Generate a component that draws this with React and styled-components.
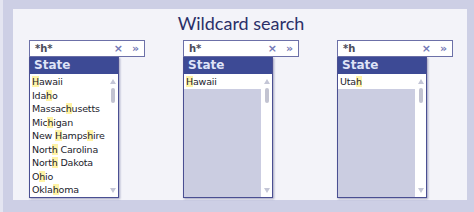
import React from 'react';
import styled, { createGlobalStyle } from 'styled-components';

const GlobalStyle = createGlobalStyle`
  html, body {
    margin: 0;
    padding: 0;
    background: #cdcfe5;
  }
  body {
    font-family: "DejaVu Sans", Verdana, sans-serif;
  }
`;

const Page = styled.div`
  width: 474px;
  height: 212px;
  box-sizing: border-box;
  padding: 9px 7px 12px 13px;
  background: linear-gradient(90deg, #e4e5f1 0, #e4e5f1 3px, #cdcfe5 3px);
`;

const Panel = styled.div`
  height: 100%;
  box-sizing: border-box;
  background: #f3f3f9;
  padding: 2px 14px 0 16px;
  display: flex;
  flex-direction: column;
`;

const Title = styled.h1`
  margin: 0;
  font-family: Lato, "Open Sans", sans-serif;
  font-weight: 400;
  font-size: 18px;
  line-height: 24px;
  color: #2b2f68;
  text-align: center;
  height: 29px;
`;

const Row = styled.div`
  display: flex;
  gap: 38px;
`;

const Column = styled.div`
  width: 116px;
  display: flex;
  flex-direction: column;
`;

const SearchBox = styled.div`
  height: 17px;
  box-sizing: border-box;
  border: 1px solid #6c70a8;
  background: #ffffff;
  display: flex;
  align-items: center;
  padding: 0 5px 0 5px;
  font-size: 10px;
  font-weight: bold;
  color: #4a4a58;
`;

const Query = styled.span`
  flex: 1;
`;

const Tool = styled.span`
  color: #7378b6;
  font-size: 11px;
  font-weight: bold;
  margin-left: ${p => p.gap || 0}px;
`;

const Dropdown = styled.div`
  width: 90px;
  height: 141px;
  box-sizing: border-box;
  border: 1px solid #4a4f92;
  border-top: none;
  background: #ffffff;
  box-shadow: 1px 1px 2px rgba(60, 64, 120, 0.45);
  display: flex;
  flex-direction: column;
`;

const Header = styled.div`
  height: 17px;
  background: #3d4a95;
  color: #dfe3f7;
  font-family: "DejaVu Sans", Verdana, sans-serif;
  font-weight: bold;
  font-size: 12px;
  line-height: 17px;
  padding-left: 4px;
`;

const Body = styled.div`
  flex: 1;
  display: flex;
  min-height: 0;
`;

const Items = styled.div`
  flex: 1;
  display: flex;
  flex-direction: column;
  padding-top: 1px;
`;

const Item = styled.div`
  height: 13.5px;
  font-size: 9.5px;
  line-height: 13.5px;
  color: #1c1c2c;
  padding-left: 2px;
  white-space: nowrap;
  letter-spacing: -0.2px;
`;

const Filler = styled.div`
  flex: 1;
  background: #cbcde1;
`;

const Mark = styled.span`
  background: #fff3a6;
`;

const Scroll = styled.div`
  width: 11px;
  display: flex;
  flex-direction: column;
  align-items: center;
  padding: 5px 0 4px;
  background: #ffffff;
`;

const Arrow = styled.div`
  width: 0;
  height: 0;
  border-left: 3px solid transparent;
  border-right: 3px solid transparent;
  ${p => (p.down ? 'border-top: 5px solid #c4c6d6;' : 'border-bottom: 5px solid #c4c6d6;')}
`;

const Thumb = styled.div`
  width: 4px;
  height: 15px;
  margin-top: 4px;
  border-radius: 2px;
  background: #c2c3d1;
`;

const Track = styled.div`
  flex: 1;
`;

const highlight = (text, query) => {
  const letter = query.replace(/\*/g, '').toLowerCase();
  return text.split('').map((ch, i) =>
    ch.toLowerCase() === letter ? <Mark key={i}>{ch}</Mark> : <React.Fragment key={i}>{ch}</React.Fragment>
  );
};

const searches = [
  {
    query: '*h*',
    items: ['Hawaii', 'Idaho', 'Massachusetts', 'Michigan', 'New Hampshire', 'North Carolina', 'North Dakota', 'Ohio', 'Oklahoma'],
  },
  { query: 'h*', items: ['Hawaii'], first: true },
  { query: '*h', items: ['Utah'], last: true },
];

const markFor = (s, item) => {
  if (s.first) {
    return [<Mark key="0">{item[0]}</Mark>, item.slice(1)];
  }
  if (s.last) {
    return [item.slice(0, -1), <Mark key="0">{item.slice(-1)}</Mark>];
  }
  return highlight(item, s.query);
};

const App = () => (
  <>
    <GlobalStyle />
    <Page>
      <Panel>
        <Title>Wildcard search</Title>
        <Row>
          {searches.map(s => (
            <Column key={s.query}>
              <SearchBox>
                <Query>{s.query}</Query>
                <Tool>×</Tool>
                <Tool gap={9}>»</Tool>
              </SearchBox>
              <Dropdown>
                <Header>State</Header>
                <Body>
                  <Items>
                    {s.items.map(item => (
                      <Item key={item}>{markFor(s, item)}</Item>
                    ))}
                    {s.items.length < 9 && <Filler />}
                  </Items>
                  <Scroll>
                    <Arrow />
                    <Thumb />
                    <Track />
                    <Arrow down />
                  </Scroll>
                </Body>
              </Dropdown>
            </Column>
          ))}
        </Row>
      </Panel>
    </Page>
  </>
);

export default App;
